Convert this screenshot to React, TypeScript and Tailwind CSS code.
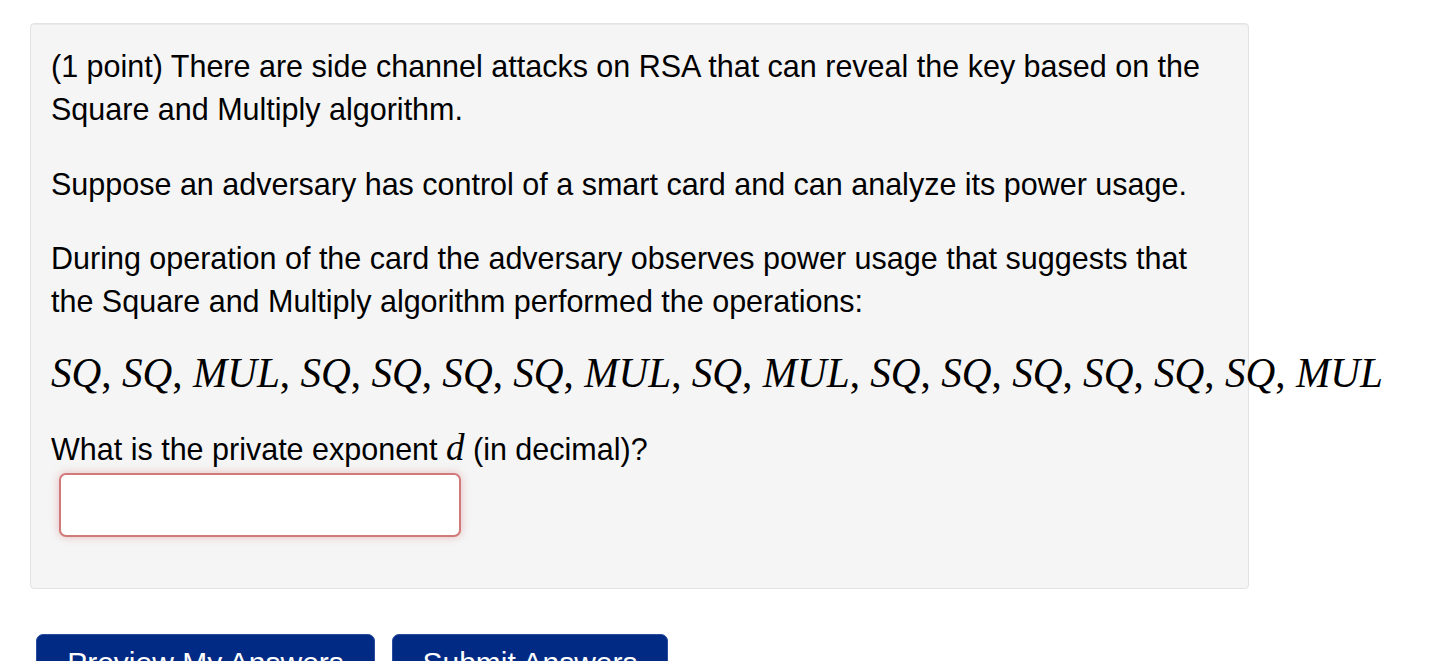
const ops = ['SQ', 'SQ', 'MUL', 'SQ', 'SQ', 'SQ', 'SQ', 'MUL', 'SQ', 'MUL', 'SQ', 'SQ', 'SQ', 'SQ', 'SQ', 'SQ', 'MUL']

const sans = "font-['Liberation_Sans',Arial,sans-serif]"
const serif = "font-['Liberation_Serif','Times_New_Roman',serif]"

export default function App() {
  return (
    <div className={`min-h-screen bg-white text-black ${sans} overflow-hidden`}>
      <div className="pl-[30px] pt-[23px] w-[1249px]">
        {/* Problem well */}
        <div className="bg-[#f5f5f5] border border-[#e3e3e3] rounded-[4px] shadow-[inset_0_1px_1px_rgba(0,0,0,0.05)] px-[20px] pt-[21px] pb-[51px]">
          <p className="text-[30.5px] leading-[43px]">
            (1 point) There are side channel attacks on RSA that can reveal the key based on the Square and Multiply algorithm.
          </p>
          <p className="text-[30.5px] leading-[43px] mt-[32px]">
            Suppose an adversary has control of a smart card and can analyze its power usage.
          </p>
          <p className="text-[30.5px] leading-[43px] mt-[31px]">
            During operation of the card the adversary observes power usage that suggests that the Square and Multiply algorithm performed the operations:
          </p>

          {/* Operation sequence */}
          <p className={`${serif} text-[41.2px] leading-[43px] mt-[29px] whitespace-nowrap`}>
            {ops.map((op, i) => (
              <span key={i}>
                <i>{op}</i>
                {i < ops.length - 1 && <span>,&nbsp;</span>}
              </span>
            ))}
          </p>

          <p className="text-[30.5px] leading-[43px] mt-[31px]">
            What is the private exponent <i className={`${serif} text-[37px]`}>d</i> (in decimal)?
          </p>
          <input
            type="text"
            className="mt-[2px] ml-[8px] w-[402px] h-[64px] bg-white border-[2px] border-[#d07a7a] rounded-[7px] shadow-[0_0_8px_rgba(210,120,120,0.45)] outline-none px-3 text-[26px]"
          />
        </div>

        {/* Buttons */}
        <div className="flex gap-[17px] mt-[45px] ml-[6px]">
          <button className="w-[339px] h-[60px] shrink-0 bg-[#012a84] border border-[#2a4c9c] rounded-t-[7px] text-white text-[30px] leading-[43px] pt-[6px] self-start flex justify-center">
            Preview My Answers
          </button>
          <button className="w-[276px] h-[60px] shrink-0 bg-[#012a84] border border-[#2a4c9c] rounded-t-[7px] text-white text-[30px] leading-[43px] pt-[6px] self-start flex justify-center">
            Submit Answers
          </button>
        </div>
      </div>
    </div>
  )
}
